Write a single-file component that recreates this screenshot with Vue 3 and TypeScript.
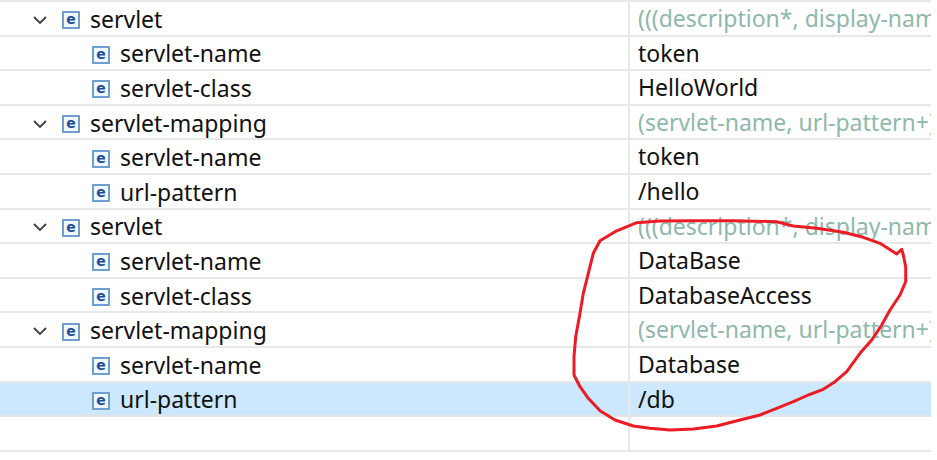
<script setup lang="ts">
interface Row {
  name: string
  value: string
  parent: boolean
  selected?: boolean
}

const DESC = '(((description*, display-name*, icon*)'
const MAP = '(servlet-name, url-pattern+)'

const rows: Row[] = [
  { name: 'servlet', value: DESC, parent: true },
  { name: 'servlet-name', value: 'token', parent: false },
  { name: 'servlet-class', value: 'HelloWorld', parent: false },
  { name: 'servlet-mapping', value: MAP, parent: true },
  { name: 'servlet-name', value: 'token', parent: false },
  { name: 'url-pattern', value: '/hello', parent: false },
  { name: 'servlet', value: DESC, parent: true },
  { name: 'servlet-name', value: 'DataBase', parent: false },
  { name: 'servlet-class', value: 'DatabaseAccess', parent: false },
  { name: 'servlet-mapping', value: MAP, parent: true },
  { name: 'servlet-name', value: 'Database', parent: false },
  { name: 'url-pattern', value: '/db', parent: false, selected: true },
  { name: '', value: '', parent: false },
]

const trace: [number, number][] = [
  [1010, 162], [1025, 148], [1030, 165], [1037, 200], [1037, 245], [1020, 285], [990, 330], [965, 375],
  [935, 420], [900, 460], [860, 515], [825, 545], [790, 568], [745, 585], [700, 605], [650, 625],
  [600, 645], [540, 660], [470, 678], [400, 687], [330, 690], [270, 685], [220, 678], [165, 660],
  [120, 632], [85, 595], [60, 560], [42, 525], [42, 470], [47, 410], [60, 340], [70, 280],
  [85, 220], [100, 160], [120, 122], [165, 95], [230, 68], [300, 63], [400, 62], [520, 62],
  [650, 65], [700, 78], [770, 85], [850, 97], [910, 112], [960, 130], [1010, 162],
]

const scribble = trace.map(([x, y]) => `${(560 + x / 3).toFixed(1)},${(200 + y / 3).toFixed(1)}`).join(' ')
</script>

<template>
  <div class="page">
    <div class="tree">
      <div
        v-for="(row, i) in rows"
        :key="i"
        class="row"
        :class="{ selected: row.selected }"
      >
        <div class="name" :class="row.parent ? 'level-0' : 'level-1'">
          <template v-if="row.name">
            <svg v-if="row.parent" class="chevron" viewBox="0 0 14 8" width="14" height="8">
              <path d="M1 1 L7 7 L13 1" fill="none" stroke="#3f3f3f" stroke-width="1.8" />
            </svg>
            <span class="icon">e</span>
            <span class="label">{{ row.name }}</span>
          </template>
        </div>
        <div class="value" :class="{ hint: row.parent }">{{ row.value }}</div>
      </div>
    </div>
    <svg class="scribble" viewBox="0 0 937 460" width="937" height="460">
      <polyline :points="scribble" fill="none" stroke="#ed1c24" stroke-width="3" stroke-linejoin="round" stroke-linecap="round" />
    </svg>
  </div>
</template>

<style>
html,
body {
  margin: 0;
  background: #fff;
}
</style>

<style scoped>
.page {
  position: relative;
  width: 937px;
  height: 460px;
  overflow: hidden;
  background: #fff;
  font-family: "Noto Sans", "Open Sans", sans-serif;
}
.tree {
  width: 931px;
  padding-top: 2px;
  box-shadow: inset 0 2px 0 #e8e8e8;
  box-sizing: border-box;
}
.row {
  display: flex;
  height: 34.6px;
  box-sizing: border-box;
  border-bottom: 2px solid #e8e8e8;
}
.row.selected {
  background: #cce8ff;
  border-bottom-color: #e4e4e4;
}
.name {
  width: 628px;
  flex: none;
  display: flex;
  align-items: center;
  box-sizing: border-box;
}
.level-0 {
  padding-left: 33px;
}
.level-1 {
  padding-left: 92px;
}
.chevron {
  flex: none;
  margin-right: 15px;
  margin-top: 3px;
}
.icon {
  flex: none;
  width: 18px;
  height: 18px;
  box-sizing: border-box;
  border: 2px solid #6f9fd0;
  background: #f2f7fc;
  color: #1f4f9c;
  font: bold 14px/13px "DejaVu Sans", sans-serif;
  text-align: center;
  margin-right: 10px;
  margin-top: 4px;
}
.label {
  font-size: 23px;
  line-height: 30px;
  padding-top: 1px;
  color: #111;
  white-space: nowrap;
}
.value {
  flex: 1;
  min-width: 0;
  overflow: hidden;
  box-sizing: border-box;
  border-left: 2px solid #e8e8e8;
  padding-left: 8px;
  font-size: 23px;
  line-height: 33px;
  color: #111;
  white-space: nowrap;
}
.value.hint {
  color: #8fb8ac;
}
.scribble {
  position: absolute;
  inset: 0;
  pointer-events: none;
}
</style>
